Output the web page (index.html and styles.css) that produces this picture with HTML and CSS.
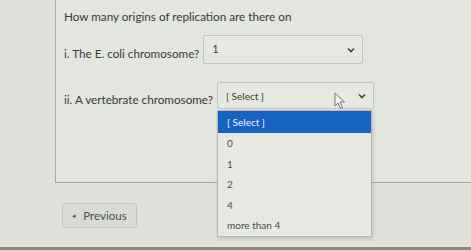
FILE: index.html
```html
<!DOCTYPE html>
<html lang="en">
<head>
    <meta charset="UTF-8">
    <meta name="viewport" content="width=device-width, initial-scale=1.0">
    <title>Quiz Question</title>
    <link rel="stylesheet" href="styles.css">
</head>
<body>

    <div class="page">
        <!-- Question card -->
        <div class="card">
            <p class="question">How many origins of replication are there on</p>

            <div class="row row-first">
                <span class="label">i. The E. coli chromosome?</span>
                <div class="select select-wide">
                    <span class="value">1</span>
                    <svg class="chevron" width="8" height="6" viewBox="0 0 8 6"><path d="M1 1.5 L4 4.5 L7 1.5" fill="none" stroke="#444" stroke-width="1.6"/></svg>
                </div>
            </div>

            <div class="row row-second">
                <span class="label">ii. A vertebrate chromosome?</span>
                <div class="select select-open">
                    <span class="value value-small">[ Select ]</span>
                    <svg class="chevron" width="8" height="6" viewBox="0 0 8 6"><path d="M1 1.5 L4 4.5 L7 1.5" fill="none" stroke="#444" stroke-width="1.6"/></svg>

                    <!-- mouse pointer -->
                    <svg class="cursor" width="12" height="18" viewBox="0 0 12 18"><path d="M1 1 L1 14 L4 11 L6.5 16.5 L8.5 15.5 L6 10 L10.5 10 Z" fill="#f4f5f2" stroke="#777" stroke-width="1"/></svg>

                    <!-- open dropdown -->
                    <ul class="dropdown">
                        <li class="option selected">[ Select ]</li>
                        <li class="option">0</li>
                        <li class="option">1</li>
                        <li class="option">2</li>
                        <li class="option">4</li>
                        <li class="option">more than 4</li>
                    </ul>
                </div>
            </div>
        </div>

        <!-- Navigation -->
        <div class="nav">
            <button type="button" class="prev"><span class="arrow">&#9666;</span> Previous</button>
        </div>
    </div>

</body>
</html>
```

FILE: styles.css
```css
* {
    box-sizing: border-box;
    font-family: Lato, "Open Sans", sans-serif;
}

body {
    margin: 0;
    background: #dfe2dc;
    color: #363a38;
    height: 250px;
    overflow: hidden;
}

.page {
    height: 250px;
    border-bottom: 3px solid #8a8c88;
}

.card {
    margin-left: 55px;
    height: 183px;
    padding: 9px 0 0 8px;
    border-left: 1px solid #a9aca6;
    border-bottom: 1px solid #a3a6a0;
    background: #e3e5df;
}

.question {
    margin: 0;
    font-size: 11.7px;
    line-height: 15px;
}

.row {
    display: flex;
    align-items: center;
    gap: 4px;
}

.row-first {
    margin-top: 11px;
}

.row-second {
    margin-top: 18px;
}

.label {
    font-size: 11.7px;
    padding-top: 7px;
}

.select {
    position: relative;
    display: flex;
    align-items: center;
    justify-content: space-between;
    width: 157px;
    height: 27px;
    padding: 0 7px 0 8px;
    border: 1px solid #c3c6c0;
    border-radius: 2px;
    background: #e6e8e2;
}

.select-wide {
    width: 160px;
    height: 29px;
}

.value {
    font-size: 11px;
    padding-bottom: 2px;
}

.value-small {
    font-size: 10px;
    padding-bottom: 0;
}

.chevron {
    margin-top: 1px;
}

.cursor {
    position: absolute;
    left: 116px;
    top: 9px;
}

.dropdown {
    position: absolute;
    left: -1px;
    top: 27px;
    width: 155px;
    margin: 0;
    padding: 0;
    list-style: none;
    background: #e6e8e2;
    border: 1px solid #b5b8b2;
    box-shadow: 1px 2px 4px rgba(0, 0, 0, 0.15);
}

.option {
    height: 20.5px;
    line-height: 20.5px;
    padding-left: 9px;
    font-size: 10px;
    color: #4a4e4b;
}

.option.selected {
    height: 22px;
    line-height: 22px;
    background: #1763c4;
    color: #f2f4f8;
}

.nav {
    padding: 20px 0 0 62px;
}

.prev {
    width: 75px;
    height: 25px;
    border: 1px solid #c4c7c1;
    border-radius: 3px;
    background: #d8dbd5;
    color: #4b504c;
    font-size: 11.5px;
    padding: 0;
    cursor: pointer;
}

.arrow {
    font-size: 7px;
    margin-right: 4px;
    vertical-align: 2px;
}
```
